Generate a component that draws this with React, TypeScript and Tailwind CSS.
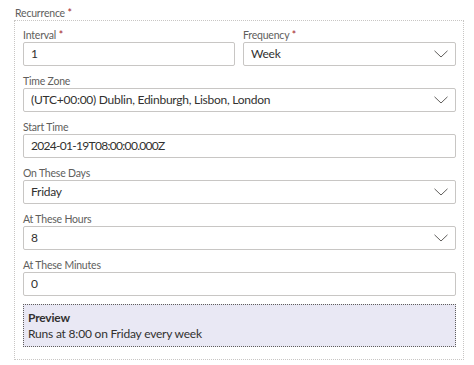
import React from 'react';

const font = { fontFamily: 'Lato, "Noto Sans", sans-serif' };

function Chevron() {
  return (
    <svg width="14" height="8" viewBox="0 0 14 8" fill="none" className="shrink-0">
      <path d="M0.5 0.8L7 7L13.5 0.8" stroke="#605e5c" strokeWidth="1" />
    </svg>
  );
}

function Label({ text, required }: { text: string; required?: boolean }) {
  return (
    <div className="h-[14px] text-[10.5px] leading-[14px] tracking-[-0.2px] text-[#605e5c]">
      {text}
      {required && <span className="text-[#a4262c]"> *</span>}
    </div>
  );
}

function Field({ label, value, required, select, tight }: { label: string; value: string; required?: boolean; select?: boolean; tight?: boolean }) {
  return (
    <div className="flex flex-col">
      <Label text={label} required={required} />
      <div className={`h-[24px] border border-[#c8c6c4] rounded-[2px] bg-white flex items-center pl-[7px] pr-[7px] text-[12px] text-[#323130] ${tight ? 'tracking-[-0.7px]' : 'tracking-[-0.25px]'}`}>
        <span className="flex-1 truncate">{value}</span>
        {select && <Chevron />}
      </div>
    </div>
  );
}

export default function App() {
  return (
    <div className="w-[474px] h-[365px] bg-white pl-[14px] pt-[6px]" style={font}>
      <div className="pl-[1px]">
        <Label text="Recurrence" required />
      </div>
      <div className="w-[450px] h-[340px] border border-dotted border-[#c8c6c4] pl-[8px] pr-[7px] pt-[7px] flex flex-col gap-[8px]">
        <div className="grid grid-cols-[212px_213px] gap-[8px]">
          <Field label="Interval" value="1" required />
          <Field label="Frequency" value="Week" required select />
        </div>
        <Field label="Time Zone" value="(UTC+00:00) Dublin, Edinburgh, Lisbon, London" select />
        <Field label="Start Time" value="2024-01-19T08:00:00.000Z" tight />
        <Field label="On These Days" value="Friday" select />
        <Field label="At These Hours" value="8" select />
        <Field label="At These Minutes" value="0" />
        <div className="h-[43px] border border-dotted border-[#605e5c] bg-[#e9e8f4] pl-[4px] pt-[5px] text-[12px] leading-[16px] tracking-[-0.2px] text-[#323130]">
          <div className="font-bold">Preview</div>
          <div>Runs at 8:00 on Friday every week</div>
        </div>
      </div>
    </div>
  );
}
